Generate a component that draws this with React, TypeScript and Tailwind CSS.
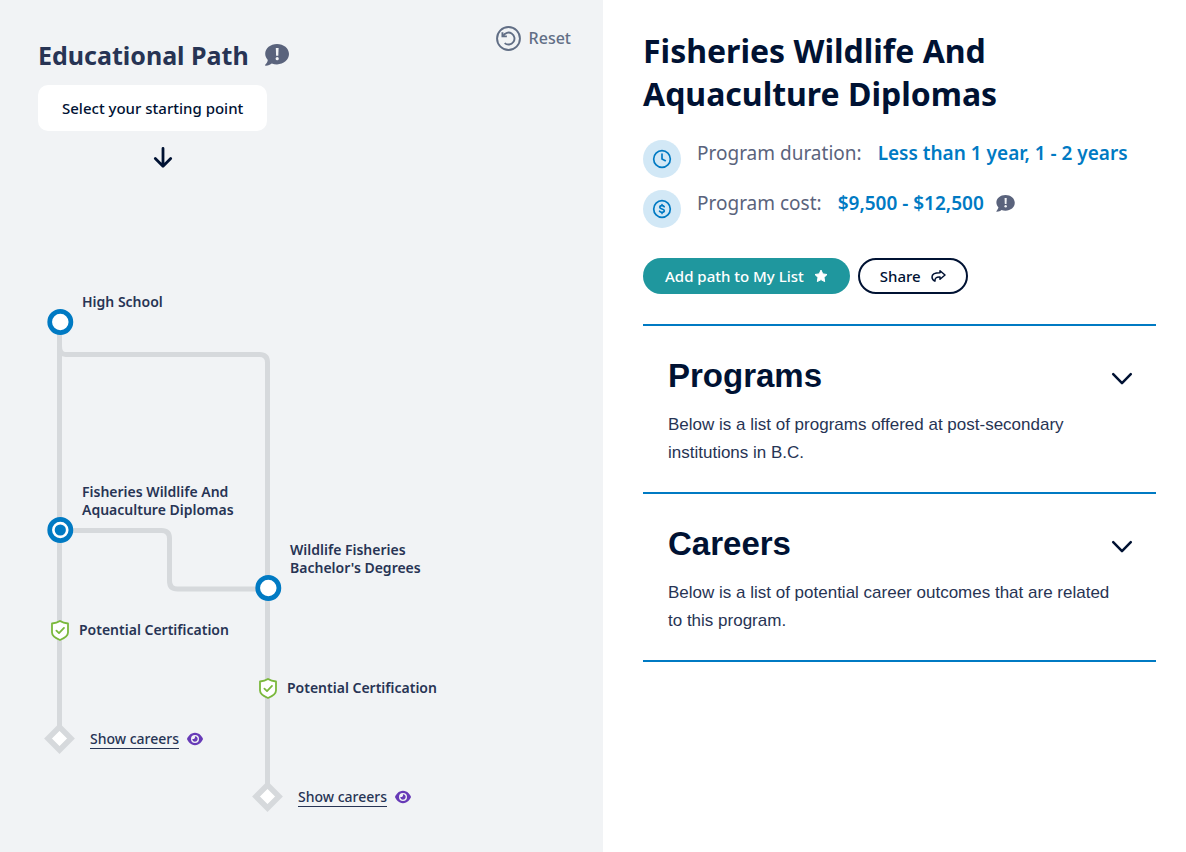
import { useState } from "react";
import { Clock } from "lucide-react";
import { FaEye } from "react-icons/fa6";

type Stop = {
  x: number;
  y: number;
  lines: string[];
  selected?: boolean;
};

const stops: Stop[] = [
  { x: 60, y: 142, lines: ["High School"] },
  { x: 60, y: 350, lines: ["Fisheries Wildlife And", "Aquaculture Diplomas"], selected: true },
  { x: 268, y: 408, lines: ["Wildlife Fisheries", "Bachelor's Degrees"] },
];

const certifications = [
  { x: 60, y: 450 },
  { x: 268, y: 508 },
];

const careerEnds = [
  { x: 60, y: 558 },
  { x: 268, y: 616 },
];

const sections = [
  {
    id: "programs",
    title: "Programs",
    text: "Below is a list of programs offered at post-secondary institutions in B.C.",
  },
  {
    id: "careers",
    title: "Careers",
    text: "Below is a list of potential career outcomes that are related to this program.",
  },
];

function HintIcon({ className }: { className?: string }) {
  return (
    <svg viewBox="0 0 24 22" className={className} aria-hidden="true">
      <path
        d="M12 0C5.4 0 .2 4.3.2 9.8c0 2.400 1 4.500 2.600 6.200-.2 1.700-1.100 3.200-2.400 4.600-.5.5-.2 1.100.4 1.100 2.500 0 4.500-1 6-2.200 1.600.6 3.400.9 5.200.9 6.600 0 12-4.500 12-10.300S18.600 0 12 0Z"
        fill="#5a637c"
      />
      <path d="M10.800 4h2.800l-.3 7.800h-2.200Z" fill="#f1f3f5" />
      <circle cx="12.200" cy="14.700" r="1.600" fill="#f1f3f5" />
    </svg>
  );
}

function ResetIcon() {
  return (
    <svg viewBox="0 0 26 26" className="size-[25px]" fill="none" stroke="currentColor" strokeWidth="2" aria-hidden="true">
      <circle cx="13" cy="13" r="11.900" />
      <path d="M7.500 10.200A6.200 6.200 0 1 1 9 17.800" />
      <path d="M6.700 6.400v4.400h4.600" />
    </svg>
  );
}

function DollarIcon() {
  return (
    <svg viewBox="0 0 20 20" className="size-5" fill="none" stroke="currentColor" strokeWidth="1.700" strokeLinecap="round" aria-hidden="true">
      <circle cx="10" cy="10" r="8.300" />
      <path d="M12.200 7.700c-.5-.7-1.300-1-2.200-1-1.300 0-2.200.6-2.200 1.600 0 2.200 4.500 1.100 4.500 3.400 0 1-.9 1.600-2.300 1.600-1 0-1.900-.4-2.400-1.100M10 5.500v1.200M10 13.300v1.200" />
    </svg>
  );
}

function StarIcon() {
  return (
    <svg viewBox="0 0 14 14" className="size-[14px]" fill="currentColor" stroke="currentColor" strokeLinejoin="round" aria-hidden="true">
      <path d="m7 1.100 1.800 3.800 4.200.6-3 2.900.7 4.200L7 10.600l-3.700 2 .7-4.200-3-2.900 4.200-.6Z" />
    </svg>
  );
}

function ShareIcon() {
  return (
    <svg viewBox="0 0 15 14" className="h-[14px] w-[15px]" fill="none" stroke="currentColor" strokeWidth="1.500" strokeLinejoin="round" aria-hidden="true">
      <path d="M9 1.700 14 6l-5 4.300V8C5.600 7.800 3.900 8.800 3.900 12.200 1.600 11 1 9.300 1 8c0-2.900 2.700-4.200 8-4.200Z" />
    </svg>
  );
}

function ArrowDownIcon() {
  return (
    <svg viewBox="0 0 20 22" className="h-[22px] w-5" fill="none" stroke="currentColor" strokeWidth="2.800" strokeLinecap="round" strokeLinejoin="round" aria-hidden="true">
      <path d="M10 1.500v17M2.300 11.500l7.700 7.700 7.700-7.700" />
    </svg>
  );
}

function ChevronIcon() {
  return (
    <svg viewBox="0 0 24 14" className="h-[14px] w-6" fill="none" stroke="currentColor" strokeWidth="2.500" strokeLinecap="round" strokeLinejoin="round" aria-hidden="true">
      <path d="m3.200 2.200 8.800 9 8.800-9" />
    </svg>
  );
}

function ShieldIcon() {
  return (
    <svg viewBox="0 0 18 21" className="h-[21px] w-[18px]" fill="#fff" stroke="#7ab83c" strokeWidth="1.800" strokeLinecap="round" strokeLinejoin="round" aria-hidden="true">
      <path d="M9 1c2.200 1.500 4.800 2.300 8 2.500v9c0 3.200-3.300 5.600-8 7.500-4.700-1.900-8-4.300-8-7.500v-9C4.200 3.300 6.800 2.500 9 1Z" />
      <path d="m5.400 10.600 2.600 2.500 5-5.200" fill="none" />
    </svg>
  );
}

function PathMap() {
  return (
    <div className="relative h-[650px]">
      <svg viewBox="0 0 460 650" className="absolute left-0 top-0 h-[650px] w-[460px]" fill="none" stroke="#d6d9dc" strokeWidth="5" aria-hidden="true">
        <path d="M59.500 142V552M267.500 408V610" />
        <path d="M59.500 166q0 8.500 6 8.500H259.500q8 0 8 8V408" />
        <path d="M60 350.500H161.500q8 0 8 8V401q0 8 8 8H268" />
        {careerEnds.map((end) => (
          <path
            key={end.x}
            d={`M${end.x - 0.5} ${end.y - 11}l11.500 11.500-11.500 11.500-11.500-11.500Z`}
            fill="#fff"
            strokeWidth="5.500"
          />
        ))}
        {stops.map((stop) => (
          <g key={stop.lines[0]}>
            <circle cx={stop.x + 0.3} cy={stop.y} r="10.600" fill="#fff" stroke="#007ac3" strokeWidth="4.700" />
            {stop.selected && <circle cx={stop.x + 0.3} cy={stop.y} r="5.600" fill="#007ac3" stroke="none" />}
          </g>
        ))}
      </svg>

      {stops.map((stop) => (
        <button
          key={stop.lines[0]}
          type="button"
          className="absolute -translate-y-full text-left text-sm font-semibold leading-[18px] text-[#273454]"
          style={{ left: stop.x + 22, top: stop.y - 11 }}
        >
          {stop.lines.map((line) => (
            <span key={line} className="block whitespace-nowrap">
              {line}
            </span>
          ))}
        </button>
      ))}

      {certifications.map((cert) => (
        <div
          key={cert.x}
          className="absolute flex h-[22px] -translate-y-1/2 items-center gap-[10px] whitespace-nowrap text-sm font-semibold leading-5 text-[#273454]"
          style={{ left: cert.x - 9, top: cert.y }}
        >
          <ShieldIcon />
          Potential Certification
        </div>
      ))}

      {careerEnds.map((end) => (
        <button
          key={end.x}
          type="button"
          className="absolute flex h-5 -translate-y-1/2 items-center gap-2 whitespace-nowrap text-sm font-medium text-[#273454]"
          style={{ left: end.x + 30, top: end.y + 1 }}
        >
          <span className="h-5 border-b border-[#273454] leading-[19px]">Show careers</span>
          <FaEye className="size-4 text-[#673ab7]" />
        </button>
      ))}
    </div>
  );
}

export default function App() {
  const [open, setOpen] = useState<string | null>(null);

  return (
    <div className="grid min-h-screen grid-cols-[603fr_583fr] bg-white font-['Noto_Sans',sans-serif] text-[#001233]">
      <section className="bg-[#f1f3f5]">
        <header className="flex items-start justify-between pl-[38px] pr-8 pt-6">
          <div className="mt-4 flex items-center gap-4">
            <h2 className="text-[25px] font-bold leading-[30px] text-[#273454]">Educational Path</h2>
            <button type="button" aria-label="About educational paths">
              <HintIcon className="h-[22px] w-6" />
            </button>
          </div>
          <button type="button" className="flex h-7 items-center gap-2 text-base font-medium text-[#616e85]">
            <ResetIcon />
            Reset
          </button>
        </header>

        <div className="mt-[15px] flex flex-col items-start gap-4 pl-[38px]">
          <button type="button" className="h-[46px] rounded-[10px] bg-white px-6 text-[15px] font-medium">
            Select your starting point
          </button>
          <div className="flex w-[250px] justify-center">
            <ArrowDownIcon />
          </div>
        </div>

        <div className="pt-[11px]">
          <PathMap />
        </div>
      </section>

      <main className="pb-10 pl-10 pr-[30px] pt-[29px]">
        <h1 className="max-w-[420px] text-[32px] font-bold leading-[43px]">Fisheries Wildlife And Aquaculture Diplomas</h1>

        <dl className="mt-[25px] flex flex-col gap-3 text-[19px] leading-[27px]">
          <div className="flex items-start gap-4">
            <span className="flex size-[38px] items-center justify-center rounded-full bg-[#d2e8f6] text-[#007ac3]">
              <Clock className="size-5" />
            </span>
            <dt className="text-[#5a637c]">Program duration:</dt>
            <dd className="font-semibold text-[#007ac3]">Less than 1 year, 1 - 2 years</dd>
          </div>
          <div className="flex items-start gap-4">
            <span className="flex size-[38px] items-center justify-center rounded-full bg-[#d2e8f6] text-[#007ac3]">
              <DollarIcon />
            </span>
            <dt className="text-[#5a637c]">Program cost:</dt>
            <dd className="flex items-center gap-3 font-semibold text-[#007ac3]">
              $9,500 - $12,500
              <button type="button" aria-label="About program cost">
                <HintIcon className="h-[17px] w-[19px]" />
              </button>
            </dd>
          </div>
        </dl>

        <div className="mt-[30px] flex gap-2 text-[15px] font-medium">
          <button type="button" className="flex h-9 items-center gap-[10px] rounded-full bg-[#1f979e] px-[22px] text-white">
            Add path to My List
            <StarIcon />
          </button>
          <button type="button" className="flex h-9 items-center gap-[10px] rounded-full border-2 border-[#001233] px-5">
            Share
            <ShareIcon />
          </button>
        </div>

        <div className="mt-[30px] border-t-2 border-[#007ac3] font-['Liberation_Sans',Arial,sans-serif]">
          {sections.map((section) => (
            <section key={section.id} className="border-b-2 border-[#007ac3] pb-[25px] pl-[25px] pr-[22px] pt-[30px]">
              <h2>
                <button
                  type="button"
                  aria-expanded={open === section.id}
                  onClick={() => setOpen(open === section.id ? null : section.id)}
                  className="flex w-full items-center justify-between text-[33px] font-bold leading-10"
                >
                  {section.title}
                  <span className="pt-[6px]">
                    <ChevronIcon />
                  </span>
                </button>
              </h2>
              <p className="mt-[15px] max-w-[450px] text-[17px] leading-7 text-[#273454]">{section.text}</p>
            </section>
          ))}
        </div>
      </main>
    </div>
  );
}
